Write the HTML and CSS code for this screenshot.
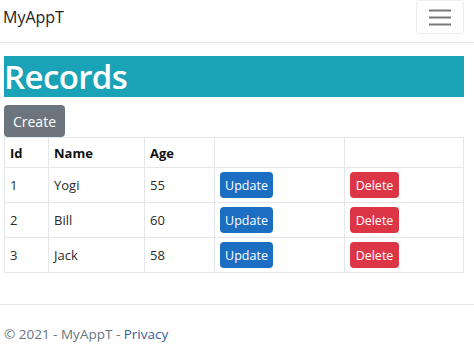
FILE: index.html
```html
<!DOCTYPE html>
<html>
<head>
<meta charset="utf-8">
<link rel="stylesheet" href="styles.css">
</head>
<body>
<header class="navbar">
  <a class="brand" href="#">MyAppT</a>
  <button class="toggler" type="button">
    <svg width="22" height="17" viewBox="0 0 22 17"><path d="M0 1.5h22M0 8.5h22M0 15.5h22" stroke="#7a7a7a" stroke-width="2"/></svg>
  </button>
</header>
<main class="container">
  <h1 class="title">Records</h1>
  <button class="btn btn-create">Create</button>
  <table class="table">
    <thead>
      <tr><th class="c-id">Id</th><th class="c-name">Name</th><th class="c-age">Age</th><th class="c-up"></th><th></th></tr>
    </thead>
    <tbody>
      <tr><td>1</td><td>Yogi</td><td>55</td><td><button class="btn btn-sm btn-up">Update</button></td><td><button class="btn btn-sm btn-del">Delete</button></td></tr>
      <tr><td>2</td><td>Bill</td><td>60</td><td><button class="btn btn-sm btn-up">Update</button></td><td><button class="btn btn-sm btn-del">Delete</button></td></tr>
      <tr><td>3</td><td>Jack</td><td>58</td><td><button class="btn btn-sm btn-up">Update</button></td><td><button class="btn btn-sm btn-del">Delete</button></td></tr>
    </tbody>
  </table>
</main>
<footer class="footer">
  <div class="footer-inner">© 2021 - MyAppT - <a href="#">Privacy</a></div>
</footer>
</body>
</html>
```
FILE: styles.css
```css
* { box-sizing: border-box; }
html, body { margin: 0; padding: 0; }
body {
  font-family: "Open Sans", "Noto Sans", sans-serif;
  color: #212529;
  background: #fff;
  width: 474px;
  height: 349px;
  overflow: hidden;
}
.navbar {
  height: 43px;
  border-bottom: 1px solid #e5e5e5;
  box-shadow: 0 1px 3px rgba(0,0,0,.04);
  display: flex;
  justify-content: space-between;
  align-items: flex-start;
  padding: 0 10px 0 3px;
}
.brand {
  font-size: 16px;
  color: #222;
  text-decoration: none;
  line-height: 34px;
}
.toggler {
  width: 48px;
  height: 34px;
  border: 1px solid #ececec;
  border-radius: 4px;
  background: #fff;
  display: flex;
  align-items: center;
  justify-content: center;
  padding: 0;
}
.container {
  padding: 13px 10px 0 4px;
}
.title {
  margin: 0;
  height: 41px;
  background: #1aa2b7;
  color: #fff;
  font-weight: 600;
  font-size: 33px;
  line-height: 41px;
  letter-spacing: -0.6px;
}
.btn {
  font-family: inherit;
  border: none;
  color: #fff;
  border-radius: 4px;
  cursor: pointer;
}
.btn-create {
  margin-top: 8px;
  width: 61px;
  height: 32px;
  background: #6c757d;
  font-size: 14px;
  padding: 0;
}
.table {
  width: 460px;
  border-collapse: collapse;
  font-size: 13px;
  color: #2a2a2a;
}
.table th, .table td {
  border: 1px solid #e3e6ea;
  padding: 0 5px;
  text-align: left;
  vertical-align: middle;
}
.table thead tr { height: 30px; }
.table tbody tr { height: 35px; }
.table th { font-weight: 700; color: #111; }
.c-id { width: 44px; }
.c-name { width: 96px; }
.c-age { width: 70px; }
.c-up { width: 130px; }
.btn-sm {
  height: 26px;
  font-size: 12.5px;
  padding: 0;
  display: block;
}
.btn-up { background: #1b6ec2; width: 53px; }
.btn-del { background: #dc3545; width: 49px; }
.footer {
  margin-top: 31px;
  border-top: 1px solid #e5e5e5;
}
.footer-inner {
  padding: 20px 4px 0;
  font-size: 13.5px;
  color: #6c757d;
}
.footer a { color: #3a5d9c; text-decoration: none; }
```
